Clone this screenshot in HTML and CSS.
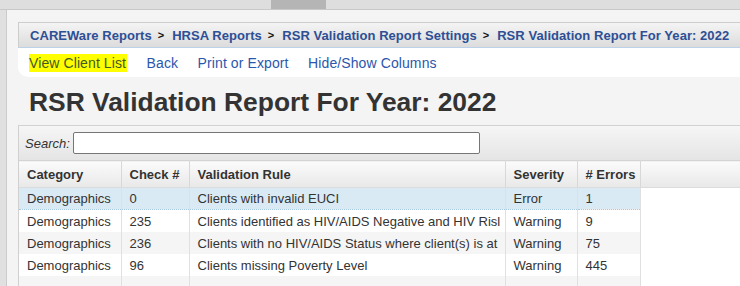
FILE: index.html
```html
<!DOCTYPE html>
<html>
<head>
<meta charset="utf-8">
<link rel="stylesheet" href="styles.css">
</head>
<body>
<div class="scrollbar"><div class="thumb"></div></div>
<div class="frame">
  <div class="gutter"></div>
  <div class="main">
    <div class="crumbs">
      <a class="crumb">CAREWare Reports</a><span class="sep">&gt;</span>
      <a class="crumb">HRSA Reports</a><span class="sep">&gt;</span>
      <a class="crumb">RSR Validation Report Settings</a><span class="sep">&gt;</span>
      <a class="crumb">RSR Validation Report For Year: 2022</a>
    </div>
    <div class="actions">
      <a class="action highlight">View Client List</a>
      <a class="action">Back</a>
      <a class="action">Print or Export</a>
      <a class="action">Hide/Show Columns</a>
    </div>
    <h1 class="title">RSR Validation Report For Year: 2022</h1>
    <div class="grid">
      <div class="search">
        <label class="search-label">Search:</label>
        <input class="search-input" type="text">
      </div>
      <table class="report">
        <colgroup>
          <col class="c-cat"><col class="c-chk"><col class="c-rule"><col class="c-sev"><col class="c-err"><col>
        </colgroup>
        <thead>
          <tr><th>Category</th><th>Check #</th><th>Validation Rule</th><th>Severity</th><th># Errors</th><th class="fill"></th></tr>
        </thead>
        <tbody>
          <tr class="selected"><td>Demographics</td><td>0</td><td>Clients with invalid EUCI</td><td>Error</td><td>1</td><td class="fill"></td></tr>
          <tr><td>Demographics</td><td>235</td><td>Clients identified as HIV/AIDS Negative and HIV Risl</td><td>Warning</td><td>9</td><td class="fill"></td></tr>
          <tr class="odd"><td>Demographics</td><td>236</td><td>Clients with no HIV/AIDS Status where client(s) is at</td><td>Warning</td><td>75</td><td class="fill"></td></tr>
          <tr><td>Demographics</td><td>96</td><td>Clients missing Poverty Level</td><td>Warning</td><td>445</td><td class="fill"></td></tr>
          <tr class="odd"><td></td><td></td><td></td><td></td><td></td><td class="fill"></td></tr>
        </tbody>
      </table>
    </div>
  </div>
</div>
</body>
</html>
```
FILE: styles.css
```css
html, body {
  margin: 0;
  padding: 0;
}
body {
  width: 740px;
  height: 286px;
  overflow: hidden;
  background: #e0e0e0;
  font-family: "Liberation Sans", Arial, sans-serif;
  color: #333;
}
.scrollbar {
  height: 9px;
  border-bottom: 1px solid #c9c9c9;
  background: #dedede;
  display: flex;
}
.thumb {
  margin-left: 271px;
  width: 55px;
  background: #b5b5b5;
}
.frame {
  display: flex;
  height: 276px;
}
.gutter {
  width: 6px;
  background: #e0e0e0;
  border-right: 1px solid #cbcbcb;
}
.main {
  flex: 1;
  min-width: 0;
  background: #f4f4f4;
  padding: 12px 0 0 11px;
}
.crumbs {
  height: 24px;
  border-top: 1px solid #cdcdcd;
  border-left: 1px solid #cdcdcd;
  border-bottom: 1px solid #bcd2e8;
  background: linear-gradient(#f4f4f4, #dcdcdc);
  padding-left: 11px;
  display: flex;
  align-items: center;
  white-space: nowrap;
  font-size: 13px;
  font-weight: bold;
  letter-spacing: 0.05px;
}
.crumb {
  color: #2d4f95;
}
.sep {
  color: #111;
  font-size: 11px;
  margin: 0 8px 0 6px;
}
.actions {
  height: 29px;
  background: #fff;
  border-bottom-left-radius: 10px;
  padding-left: 11px;
  display: flex;
  align-items: center;
  gap: 19.5px;
  font-size: 14px;
  letter-spacing: 0.1px;
}
.action {
  color: #2a57ad;
}
.highlight {
  background: #ffff00;
  color: #3e5a22;
  padding: 1px 1px 1px 0;
}
.title {
  margin: 10px 0 8px 11px;
  font-size: 26.4px;
  line-height: 30px;
  font-weight: bold;
  color: #333;
}
.grid {
  border-left: 1px solid #d0d0d0;
}
.search {
  height: 34px;
  border-top: 1px solid #d2d2d2;
  background: linear-gradient(#f6f6f6, #e5e5e5);
  display: flex;
  align-items: center;
  padding-left: 6px;
}
.search-label {
  font-size: 13px;
  font-style: italic;
  color: #333;
}
.search-input {
  margin: 0 0 0 3px;
  width: 407px;
  height: 22px;
  box-sizing: border-box;
  border: 1px solid #767676;
  border-radius: 2px;
  background: #fff;
  padding: 0;
}
.report {
  width: 100%;
  border-collapse: collapse;
  table-layout: fixed;
  font-size: 13px;
}
.c-cat { width: 102px; }
.c-chk { width: 68px; }
.c-rule { width: 316px; }
.c-sev { width: 72px; }
.c-err { width: 63px; }
.report th {
  height: 26px;
  padding: 0 8px;
  text-align: left;
  font-weight: bold;
  color: #333;
  background: linear-gradient(#fbfbfb, #e8e8e8);
  border-top: 1px solid #d4d4d4;
  border-right: 1px solid #d8d8d8;
  border-bottom: 1px solid #dcdcdc;
  white-space: nowrap;
  overflow: hidden;
}
.report th.fill {
  border-right: none;
}
.report td {
  height: 22px;
  padding: 0 8px;
  background: #fff;
  border-right: 1px solid #e0e0e0;
  white-space: nowrap;
  overflow: hidden;
  color: #333;
}
.report tr.odd td {
  background: #f5f5f5;
}
.report tr.selected td {
  height: 21px;
  background: #d9eaf4;
  border-bottom: 1px dotted #a6c8e0;
}
.report td.fill,
.report tr.odd td.fill,
.report tr.selected td.fill {
  background: #fff;
  border: none;
}
```
